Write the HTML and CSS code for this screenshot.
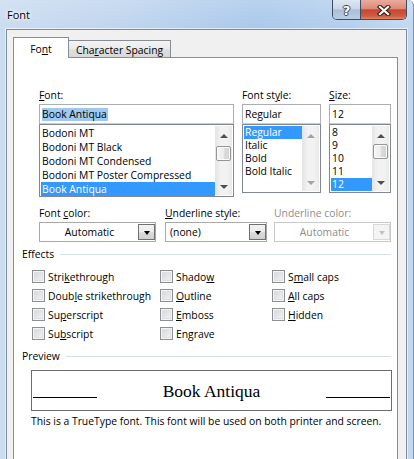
FILE: index.html
```html
<!DOCTYPE html>
<html lang="en">
<head>
<meta charset="utf-8">
<title>Font</title>
<link rel="stylesheet" href="styles.css">
</head>
<body>
<div class="window">
  <header class="titlebar">
    <span class="title">Font</span>
    <div class="caption">
      <div class="cap-btn help"><span class="help-glyph">?</span></div>
      <div class="cap-btn close">
        <svg width="14" height="11" viewBox="0 0 14 11" aria-hidden="true">
          <path d="M3 2 L11 9 M11 2 L3 9" stroke="#3a2622" stroke-width="4.4" stroke-linecap="square" fill="none"/>
          <path d="M3 2 L11 9 M11 2 L3 9" stroke="#ffffff" stroke-width="2.2" stroke-linecap="square" fill="none"/>
        </svg>
      </div>
    </div>
  </header>

  <div class="client">
    <div class="tabs">
      <div class="tab active">Fo<u>n</u>t</div>
      <div class="tab inactive">Cha<u>r</u>acter Spacing</div>
    </div>

    <div class="panel">
      <div class="font-grid">
        <div class="field">
          <div class="lbl"><u>F</u>ont:</div>
          <div class="textbox"><span class="hl">Book Antiqua</span></div>
          <div class="listbox lb-font">
            <ul class="items">
              <li>Bodoni MT</li>
              <li>Bodoni MT Black</li>
              <li>Bodoni MT Condensed</li>
              <li>Bodoni MT Poster Compressed</li>
              <li class="sel">Book Antiqua</li>
            </ul>
            <div class="vscroll">
              <span class="arr-box"><span class="arr up"></span></span>
              <span class="thumb" style="margin-top:3px"></span>
              <span class="arr-box end"><span class="arr down"></span></span>
            </div>
          </div>
        </div>

        <div class="field">
          <div class="lbl">Font st<u>y</u>le:</div>
          <div class="textbox">Regular</div>
          <div class="listbox lb-small">
            <ul class="items small">
              <li class="sel">Regular</li>
              <li>Italic</li>
              <li>Bold</li>
              <li>Bold Italic</li>
            </ul>
            <div class="vscroll">
              <span class="arr-box"><span class="arr up dim"></span></span>
              <span class="arr-box end"><span class="arr down dim"></span></span>
            </div>
          </div>
        </div>

        <div class="field">
          <div class="lbl"><u>S</u>ize:</div>
          <div class="textbox">12</div>
          <div class="listbox lb-small">
            <ul class="items small">
              <li>8</li>
              <li>9</li>
              <li>10</li>
              <li>11</li>
              <li class="sel">12</li>
            </ul>
            <div class="vscroll">
              <span class="arr-box"><span class="arr up"></span></span>
              <span class="thumb" style="margin-top:1px"></span>
              <span class="arr-box end"><span class="arr down"></span></span>
            </div>
          </div>
        </div>
      </div>

      <div class="dd-row">
        <div class="dd-field w1">
          <div class="lbl">Font <u>c</u>olor:</div>
          <div class="dropdown">
            <span class="dd-text center">Automatic</span>
            <span class="dd-btn"><span class="arr down black"></span></span>
          </div>
        </div>
        <div class="dd-field w2">
          <div class="lbl"><u>U</u>nderline style:</div>
          <div class="dropdown">
            <span class="dd-text">(none)</span>
            <span class="dd-btn"><span class="arr down black"></span></span>
          </div>
        </div>
        <div class="dd-field w3">
          <div class="lbl disabled">Underline color:</div>
          <div class="dropdown off">
            <span class="dd-text center">Automatic</span>
            <span class="dd-btn"><span class="arr down pale"></span></span>
          </div>
        </div>
      </div>

      <div class="group-head effects-head"><span>Effects</span><span class="rule"></span></div>

      <div class="effects">
        <label class="chk"><span class="cb"></span><span>Stri<u>k</u>ethrough</span></label>
        <label class="chk"><span class="cb"></span><span>Shado<u>w</u></span></label>
        <label class="chk"><span class="cb"></span><span>S<u>m</u>all caps</span></label>
        <label class="chk"><span class="cb"></span><span>Doub<u>l</u>e strikethrough</span></label>
        <label class="chk"><span class="cb"></span><span><u>O</u>utline</span></label>
        <label class="chk"><span class="cb"></span><span><u>A</u>ll caps</span></label>
        <label class="chk"><span class="cb"></span><span>Su<u>p</u>erscript</span></label>
        <label class="chk"><span class="cb"></span><span><u>E</u>mboss</span></label>
        <label class="chk"><span class="cb"></span><span><u>H</u>idden</span></label>
        <label class="chk"><span class="cb"></span><span>Su<u>b</u>script</span></label>
        <label class="chk"><span class="cb"></span><span>En<u>g</u>rave</span></label>
      </div>

      <div class="group-head preview-head"><span>Preview</span><span class="rule"></span></div>

      <div class="preview">
        <span class="pline"></span>
        <span class="ptext">Book Antiqua</span>
        <span class="pline"></span>
      </div>

      <p class="note">This is a TrueType font. This font will be used on both printer and screen.</p>
    </div>
  </div>
</div>
</body>
</html>
```

FILE: styles.css
```css
* { box-sizing: border-box; }

html, body {
  margin: 0;
  padding: 0;
  background: #ffffff;
}

body {
  width: 414px;
  height: 459px;
  overflow: hidden;
  font-family: "Open Sans", "Noto Sans", sans-serif;
  font-size: 10.35px;
  color: #000;
}

u {
  text-decoration-thickness: 1px;
  text-underline-offset: 1px;
}

/* ---------- window frame ---------- */
.window {
  width: 414px;
  height: 459px;
  overflow: hidden;
  display: flex;
  flex-direction: column;
  padding: 0 6px 0 6px;
  border-right: 1px solid #7890ab;
  border-top-right-radius: 6px;
  background:
    linear-gradient(180deg, rgba(255,255,255,0.18), rgba(255,255,255,0) 30px),
    linear-gradient(90deg, #cadcf0 0%, #bed4ee 30%, #a9c8ea 62%, #b3cfee 85%, #c3d9f1 100%);
}

.titlebar {
  height: 29px;
  flex: none;
  display: flex;
  align-items: flex-start;
}

.title {
  margin: 7px 0 0 1px;
  line-height: 16px;
  font-size: 11px;
  color: #000;
  text-shadow: 0 0 5px #fff, 0 0 3px #fff;
}

.caption {
  margin-left: auto;
  display: flex;
  height: 20px;
  border: 1px solid #3b4d63;
  border-top: none;
  border-radius: 0 0 5px 5px;
  overflow: hidden;
}

.cap-btn {
  height: 19px;
  display: flex;
  align-items: center;
  justify-content: center;
}

.help {
  width: 28px;
  border-right: 1px solid #3b4d63;
  background: linear-gradient(180deg, #dde7f3 0%, #c9d7e7 45%, #acbfd6 52%, #bccde1 100%);
}

.help-glyph {
  font-family: "DejaVu Sans", sans-serif;
  font-weight: bold;
  font-size: 13px;
  line-height: 13px;
  margin-top: 1px;
  color: #fff;
  text-shadow: -1px 0 #33465e, 1px 0 #33465e, 0 -1px #33465e, 0 1px #33465e;
}

.close {
  width: 45px;
  background: linear-gradient(180deg, #eaab9d 0%, #dd8b77 45%, #c7462f 52%, #cf5d42 85%, #dd8567 100%);
}

.close svg { display: block; margin-top: 1px; }

/* ---------- client area ---------- */
.client {
  width: 401px;
  flex: 1;
  background: #f0f0f0;
  border: 1px solid #7d8a99;
  border-bottom: none;
  box-shadow: 0 0 0 1px rgba(255,255,255,0.6);
  display: flex;
  flex-direction: column;
}

.tabs {
  display: flex;
  align-items: flex-end;
  margin: 7px 0 0 6px;
  height: 20px;
}

.tab {
  border: 1px solid #898c95;
  border-bottom: none;
  text-align: center;
  line-height: 15px;
  white-space: nowrap;
}

.tab.active {
  width: 56px;
  height: 21px;
  margin-bottom: -1px;
  padding-top: 4px;
  background: #fff;
  position: relative;
  z-index: 1;
}

.tab.inactive {
  width: 103px;
  height: 17px;
  margin-left: -1px;
  padding-top: 2px;
  background: linear-gradient(180deg, #f3f3f3 0%, #ebebeb 50%, #e0e0e0 50%, #d8d8d8 100%);
}

.panel {
  width: 385px;
  flex: 1;
  margin-left: 6px;
  background: #fff;
  border: 1px solid #898c95;
  border-bottom: none;
  padding: 29px 6px 0 8px;
}

.lbl {
  line-height: 16px;
  margin-bottom: 1px;
  white-space: nowrap;
}

.lbl.disabled { color: #8d8d8d; }

/* ---------- font / style / size ---------- */
.font-grid {
  display: grid;
  grid-template-columns: 195px 79px 62px;
  column-gap: 8px;
  align-items: start;
  margin-left: 17px;
}

.textbox {
  height: 20px;
  border: 1px solid #abadb3;
  border-bottom-color: #c9ccd2;
  padding: 0 2px;
  line-height: 18px;
  white-space: nowrap;
}

.hl {
  display: inline-block;
  line-height: 13px;
  padding: 0 1px 0 0;
  background: #9fc9ef;
  vertical-align: 0;
}

.listbox {
  display: flex;
  border: 1px solid #828790;
  padding: 1px;
}

.lb-font { height: 73px; }
.lb-small { height: 69px; }

.items {
  list-style: none;
  margin: 0;
  padding: 0;
  flex: 1;
  min-width: 0;
}

.items li {
  height: 14px;
  line-height: 14px;
  padding-left: 1px;
  white-space: nowrap;
  overflow: hidden;
}

.items.small li {
  height: 13px;
  line-height: 13px;
}

.items li.sel {
  background: #3399ff;
  color: #fff;
}

.vscroll {
  width: 17px;
  display: flex;
  flex-direction: column;
  align-items: center;
  background: linear-gradient(90deg, #e4e4e4 0%, #f2f2f2 35%, #f2f2f2 70%, #e9e9e9 100%);
}

.arr-box {
  width: 17px;
  height: 17px;
  flex: none;
  display: flex;
  align-items: center;
  justify-content: center;
}

.arr-box.end { margin-top: auto; }

.arr {
  width: 0;
  height: 0;
  border-left: 4px solid transparent;
  border-right: 4px solid transparent;
}

.arr.up { border-bottom: 4px solid #4f4f4f; margin-top: 2px; }
.arr.down { border-top: 4px solid #4f4f4f; margin-bottom: -1px; }
.arr.up.dim { border-bottom-color: #a3a3a3; }
.arr.down.dim { border-top-color: #a3a3a3; }
.arr.down.black { border-top-color: #000; border-left-width: 3.5px; border-right-width: 3.5px; }
.arr.down.pale { border-top-color: #c2c2c2; border-left-width: 3.5px; border-right-width: 3.5px; }

.thumb {
  width: 15px;
  height: 15px;
  flex: none;
  border: 1px solid #959595;
  border-radius: 2px;
  background: linear-gradient(90deg, #f6f6f6 0%, #ececec 50%, #dcdcdc 51%, #d2d2d2 100%);
  box-shadow: inset 0 0 0 1px #fbfbfb;
}

/* ---------- dropdown row ---------- */
.dd-row {
  display: flex;
  margin: 8px 0 0 17px;
}

.dd-field.w1 { width: 117px; }
.dd-field.w2 { width: 102px; margin-left: 9px; }
.dd-field.w3 { width: 117px; margin-left: 7px; }

.lbl + .dropdown { margin-top: 1px; }

.dropdown {
  height: 20px;
  border: 1px solid #a9a9a9;
  padding: 1px 0 1px 1px;
  display: flex;
  align-items: stretch;
  background: #fff;
}

.dd-text {
  flex: 1;
  line-height: 16px;
  padding-left: 3px;
  white-space: nowrap;
}

.dd-text.center {
  text-align: center;
  padding-left: 0;
}

.dd-btn {
  width: 17px;
  border: 1px solid #707070;
  background: linear-gradient(180deg, #f2f2f2 0%, #ebebeb 50%, #dddddd 50%, #cfcfcf 100%);
  display: flex;
  align-items: center;
  justify-content: center;
}

.dropdown.off { border-color: #c9c9c9; }
.dropdown.off .dd-text { color: #8d8d8d; }
.dropdown.off .dd-btn {
  border-color: #d9d9d9;
  background: #f4f4f4;
}

/* ---------- groups ---------- */
.group-head {
  display: flex;
  align-items: center;
  gap: 6px;
  line-height: 16px;
}

.group-head .rule {
  flex: 1;
  height: 1px;
  background: #d5dfe5;
}

.effects-head { margin-top: 4px; }
.preview-head { margin-top: 5px; }

.effects {
  display: grid;
  grid-template-columns: 128px 112px 1fr;
  grid-auto-rows: 19px;
  margin: 5px 0 0 10px;
}

.chk {
  display: flex;
  align-items: center;
  gap: 3px;
  white-space: nowrap;
}

.cb {
  width: 13px;
  height: 13px;
  flex: none;
  border: 1px solid #8e8f8f;
  background: linear-gradient(135deg, #cfd2d6 0%, #e4e5e7 50%, #f6f6f6 100%);
  box-shadow: inset 0 0 0 1px #f3f3f3, inset 0 0 0 2px #dfe1e4;
}

/* ---------- preview ---------- */
.preview {
  width: 361px;
  height: 41px;
  margin: 6px 0 0 9px;
  border: 1px solid #6b6b6b;
  display: grid;
  grid-template-columns: 64px 1fr 64px;
  align-items: end;
  padding: 0 1px 0 1px;
}

.pline {
  height: 1px;
  background: #000;
  margin-bottom: 12px;
}

.ptext {
  font-family: "Liberation Serif", "Times New Roman", serif;
  font-size: 17.5px;
  line-height: 20px;
  text-align: center;
  margin-bottom: 9px;
}

.note {
  margin: 2px 0 0 9px;
  line-height: 16px;
  white-space: nowrap;
}
```
